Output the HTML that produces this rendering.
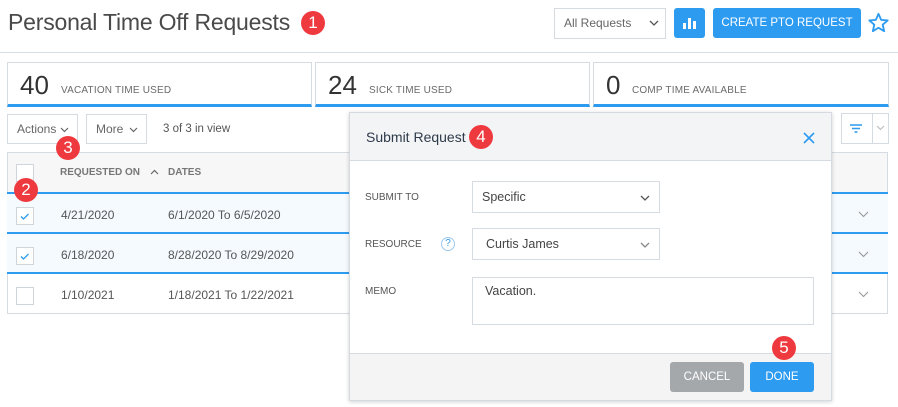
<!DOCTYPE html>
<html><head><meta charset="utf-8"><style>
*{box-sizing:border-box;margin:0;padding:0}
body{width:898px;height:407px;background:#fff;font-family:"Liberation Sans",sans-serif;position:relative;overflow:hidden;color:#444}
.a{position:absolute}
.badge{position:absolute;width:24px;height:24px;border-radius:50%;background:#ee3a3f;color:#fff;font-size:17px;text-align:center;line-height:24px}
.card{position:absolute;top:62px;height:45px;border:1px solid #d6dbe1;border-bottom:3px solid #2d9bf0}
.card .n{position:absolute;left:12px;top:7px;font-size:26px;color:#333}
.card .l{position:absolute;top:22px;font-size:10px;color:#6a6a6a;letter-spacing:.2px}
.btn{position:absolute;border:1px solid #d6dbe1;background:#fff;font-size:12px;color:#666}
.row{position:absolute;left:7px;width:881px;height:40px;border-top:2px solid #2d9bf0;font-size:12px;color:#555}
.cb{position:absolute;left:9px;width:18px;height:18px;border:1px solid #d0d5db;background:#fff}
.lab{position:absolute;left:365px;font-size:10px;color:#555}
.sel{position:absolute;left:472px;width:188px;height:32px;border:1px solid #d6dbe1;font-size:12.5px;color:#444;padding:8px 0 0 9px}
</style></head><body>
<div class="a" style="left:8px;top:9px;font-size:23px;color:#4a4a4a;letter-spacing:-0.2px">Personal Time Off Requests</div>
<div class="badge" style="left:301px;top:11px">1</div>
<div class="a" style="left:0;top:52px;width:898px;height:1px;background:#d8dde3"></div>
<div class="btn" style="left:554px;top:8px;width:112px;height:31px;padding:7px 0 0 9px">All Requests<svg class="a" style="left:94px;top:11px" width="10" height="7"><path d="M1 1l4 4 4-4" stroke="#555" fill="none" stroke-width="1.3"/></svg></div>
<div class="a" style="left:674px;top:8px;width:31px;height:30px;background:#2d9bf0;border-radius:3px"><svg class="a" style="left:9px;top:9px" width="13" height="12"><rect x="0" y="6" width="3" height="6" fill="#fff"/><rect x="5" y="1" width="3" height="11" fill="#fff"/><rect x="10" y="4" width="3" height="8" fill="#fff"/></svg></div>
<div class="a" style="left:713px;top:8px;width:148px;height:30px;background:#2d9bf0;border-radius:3px;color:#fff;font-size:11.5px;text-align:center;line-height:30px">CREATE PTO REQUEST</div>
<svg class="a" style="left:867px;top:12px" width="23" height="22" viewBox="0 0 24 24"><path d="M12 2l2.9 6.6 7.1.6-5.4 4.7 1.6 7-6.2-3.7-6.2 3.7 1.6-7L2 9.2l7.1-.6z" fill="none" stroke="#2d9bf0" stroke-width="2" stroke-linejoin="round"/></svg>

<div class="card" style="left:7px;width:305px"><span class="n">40</span><span class="l" style="left:53px">VACATION TIME USED</span></div>
<div class="card" style="left:315px;width:275px"><span class="n">24</span><span class="l" style="left:53px">SICK TIME USED</span></div>
<div class="card" style="left:593px;width:296px"><span class="n" style="left:12px">0</span><span class="l" style="left:38px">COMP TIME AVAILABLE</span></div>

<div class="btn" style="left:7px;top:114px;width:71px;height:30px;padding:7px 0 0 9px">Actions<svg class="a" style="left:52px;top:12px" width="9" height="6"><path d="M1 1l3.5 3.5L8 1" stroke="#666" fill="none" stroke-width="1.2"/></svg></div>
<div class="btn" style="left:86px;top:114px;width:61px;height:30px;padding:7px 0 0 9px">More<svg class="a" style="left:42px;top:12px" width="9" height="6"><path d="M1 1l3.5 3.5L8 1" stroke="#666" fill="none" stroke-width="1.2"/></svg></div>
<div class="a" style="left:163px;top:123px;font-size:11.5px;color:#555">3 of 3 in view</div>
<div class="btn" style="left:841px;top:113px;width:48px;height:31px"><svg class="a" style="left:8px;top:10px" width="12" height="9"><path d="M0 1h12M2 4.5h8M4.5 8h3" stroke="#2d9bf0" stroke-width="1.6"/></svg><div class="a" style="left:30px;top:0;width:1px;height:29px;background:#d6dbe1"></div><svg class="a" style="left:34px;top:11px" width="9" height="6"><path d="M1 1l3.5 3.5L8 1" stroke="#bbb" fill="none" stroke-width="1.1"/></svg></div>

<div class="a" style="left:7px;top:152px;width:881px;height:162px;border:1px solid #d6dbe1;border-top:none"></div>
<div class="a" style="left:7px;top:152px;width:881px;height:41px;background:#f7f7f7;border:1px solid #d6dbe1;border-bottom:none"></div>
<div class="cb" style="left:16px;top:164px"></div>
<div class="a" style="left:60px;top:167px;font-size:10px;color:#777;font-weight:bold">REQUESTED ON</div>
<svg class="a" style="left:150px;top:169px" width="9" height="6"><path d="M1 5l3.5-3.5L8 5" stroke="#666" fill="none" stroke-width="1.2"/></svg>
<div class="a" style="left:168px;top:167px;font-size:10px;color:#777;font-weight:bold">DATES</div>

<div class="row" style="top:192px;background:#f5fafe"><div class="cb" style="top:13px"><svg width="16" height="16"><path d="M4 8.5l2.5 2.5 5-5" stroke="#2d9bf0" fill="none" stroke-width="1.3"/></svg></div><span class="a" style="left:54px;top:14px">4/21/2020</span><span class="a" style="left:161px;top:14px">6/1/2020 To 6/5/2020</span></div>
<div class="row" style="top:232px;background:#f5fafe"><div class="cb" style="top:13px"><svg width="16" height="16"><path d="M4 8.5l2.5 2.5 5-5" stroke="#2d9bf0" fill="none" stroke-width="1.3"/></svg></div><span class="a" style="left:54px;top:14px">6/18/2020</span><span class="a" style="left:161px;top:14px">8/28/2020 To 8/29/2020</span></div>
<div class="row" style="top:272px;height:41px"><div class="cb" style="top:13px"></div><span class="a" style="left:54px;top:14px">1/10/2021</span><span class="a" style="left:161px;top:14px">1/18/2021 To 1/22/2021</span></div>
<svg class="a" style="left:858px;top:211px" width="11" height="7"><path d="M1 1l4.5 4.5L10 1" stroke="#999" fill="none" stroke-width="1.1"/></svg>
<svg class="a" style="left:858px;top:251px" width="11" height="7"><path d="M1 1l4.5 4.5L10 1" stroke="#999" fill="none" stroke-width="1.1"/></svg>
<svg class="a" style="left:858px;top:291px" width="11" height="7"><path d="M1 1l4.5 4.5L10 1" stroke="#999" fill="none" stroke-width="1.1"/></svg>

<div class="a" style="left:349px;top:112px;width:483px;height:289px;background:#fff;border:1px solid #d6dbe1;box-shadow:0 1px 4px rgba(0,0,0,.18)">
<div class="a" style="left:0;top:0;width:481px;height:48px;background:#f3f4f6;border-bottom:1px solid #d6dbe1"></div>
<div class="a" style="left:0;top:240px;width:481px;height:47px;background:#f4f4f4;border-top:1px solid #d6dbe1"></div>
</div>
<div class="a" style="left:366px;top:129px;font-size:14px;color:#2f3b4a">Submit Request</div>
<div class="badge" style="left:469px;top:125px">4</div>
<svg class="a" style="left:803px;top:132px" width="12" height="12"><path d="M1 1l10 10M11 1L1 11" stroke="#2d9bf0" stroke-width="1.6"/></svg>
<div class="lab" style="top:192px">SUBMIT TO</div>
<div class="sel" style="top:181px">Specific<svg class="a" style="left:167px;top:13px" width="10" height="6"><path d="M1 1l4 4 4-4" stroke="#555" fill="none" stroke-width="1.3"/></svg></div>
<div class="lab" style="top:239px">RESOURCE</div>
<div class="a" style="left:441px;top:237px;width:14px;height:14px;border:1px solid #9cc9ee;border-radius:50%;font-size:10px;color:#2d9bf0;text-align:center;line-height:12px">?</div>
<div class="sel" style="top:228px;padding-left:13px">Curtis James<svg class="a" style="left:167px;top:13px" width="10" height="6"><path d="M1 1l4 4 4-4" stroke="#888" fill="none" stroke-width="1.3"/></svg></div>
<div class="lab" style="top:286px">MEMO</div>
<div class="a" style="left:472px;top:277px;width:342px;height:48px;border:1px solid #d6dbe1;font-size:12.5px;padding:6px 0 0 12px">Vacation.</div>
<div class="a" style="left:670px;top:362px;width:74px;height:30px;background:#a5a8ab;border-radius:3px;color:#fff;font-size:11.5px;text-align:center;line-height:30px">CANCEL</div>
<div class="a" style="left:750px;top:362px;width:64px;height:30px;background:#2d9bf0;border-radius:3px;color:#fff;font-size:11.5px;text-align:center;line-height:30px">DONE</div>
<div class="badge" style="left:772px;top:336px">5</div>
<div class="badge" style="left:56px;top:136px">3</div>
<div class="badge" style="left:14px;top:178px">2</div>
</body></html>
